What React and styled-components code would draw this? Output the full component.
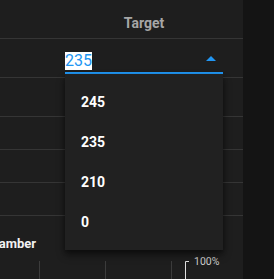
import React from "react";
import styled, { createGlobalStyle } from "styled-components";

const GlobalStyle = createGlobalStyle`
  html, body { margin: 0; padding: 0; background: #141414; }
  body { font-family: Roboto, "Noto Sans", "Liberation Sans", sans-serif; }
`;

const Screen = styled.div`
  display: flex;
  width: 274px;
  height: 279px;
  overflow: hidden;
`;

const Panel = styled.div`
  width: 243px;
  flex: none;
  background: #1e1e1e;
  display: flex;
  flex-direction: column;
  position: relative;
`;

const Side = styled.div`
  flex: 1;
  background: #141414;
`;

const Row = styled.div`
  display: flex;
  align-items: flex-start;
  height: ${(p) => p.$h}px;
  border-bottom: 1px solid #353535;
  flex: none;
`;

const Cell = styled.div`
  margin-left: 65px;
  width: 158px;
  display: flex;
  justify-content: center;
  position: relative;
`;

const HeadText = styled.span`
  font-size: 14px;
  font-weight: 700;
  color: #a6a6a6;
  padding-top: 15px;
`;

const Select = styled.div`
  width: 158px;
  height: 20px;
  margin-top: 13px;
  border-bottom: 2px solid #2196f3;
  display: flex;
  align-items: flex-start;
  justify-content: space-between;
  position: relative;
`;

const Value = styled.span`
  background: #ffffff;
  color: #2196f3;
  font-size: 16px;
  line-height: 18px;
  height: 18px;
`;

const Arrow = styled.span`
  width: 0;
  height: 0;
  border-left: 5px solid transparent;
  border-right: 5px solid transparent;
  border-bottom: 5px solid #2196f3;
  margin: 4px 7px 0 0;
`;

const Menu = styled.ul`
  position: absolute;
  top: 22px;
  left: 0;
  width: 158px;
  margin: 0;
  padding: 8px 0;
  list-style: none;
  background: #212121;
  box-shadow: 0 5px 8px rgba(0, 0, 0, 0.45), 0 2px 4px rgba(0, 0, 0, 0.3);
  z-index: 2;
`;

const Item = styled.li`
  height: 40px;
  display: flex;
  align-items: center;
  padding-left: 16px;
  font-size: 14px;
  font-weight: 700;
  color: #ffffff;
`;

const Section = styled.div`
  height: 16px;
  margin-top: 20px;
  overflow: hidden;
  white-space: nowrap;
  font-size: 13px;
  font-weight: 700;
  color: #f2f2f2;
  text-indent: -17px;
  line-height: 16px;
`;

const Chart = styled.svg`
  display: block;
  margin-top: 3px;
`;

export default function App() {
  return (
    <>
      <GlobalStyle />
      <Screen>
        <Panel>
          <Row $h={38}>
            <Cell>
              <HeadText>Target</HeadText>
            </Cell>
          </Row>
          <Row $h={38}>
            <Cell>
              <Select>
                <Value>235</Value>
                <Arrow />
                <Menu>
                  <Item>245</Item>
                  <Item>235</Item>
                  <Item>210</Item>
                  <Item>0</Item>
                </Menu>
              </Select>
            </Cell>
          </Row>
          <Row $h={38} />
          <Row $h={32} />
          <Row $h={32} />
          <Row $h={32} />
          <Section>Chamber</Section>
          <Chart width="243" height="24" viewBox="0 0 243 24">
            <line x1="39.5" y1="6" x2="39.5" y2="24" stroke="#3c3c3c" />
            <line x1="105.5" y1="6" x2="105.5" y2="24" stroke="#3c3c3c" />
            <line x1="171.5" y1="6" x2="171.5" y2="24" stroke="#3c3c3c" />
            <path d="M185.5 24 V6.5 H189" stroke="#e0e0e0" fill="none" />
            <text x="194" y="10" fill="#cfcfcf" fontSize="10.5" fontFamily="Roboto, sans-serif">100%</text>
          </Chart>
        </Panel>
        <Side />
      </Screen>
    </>
  );
}
